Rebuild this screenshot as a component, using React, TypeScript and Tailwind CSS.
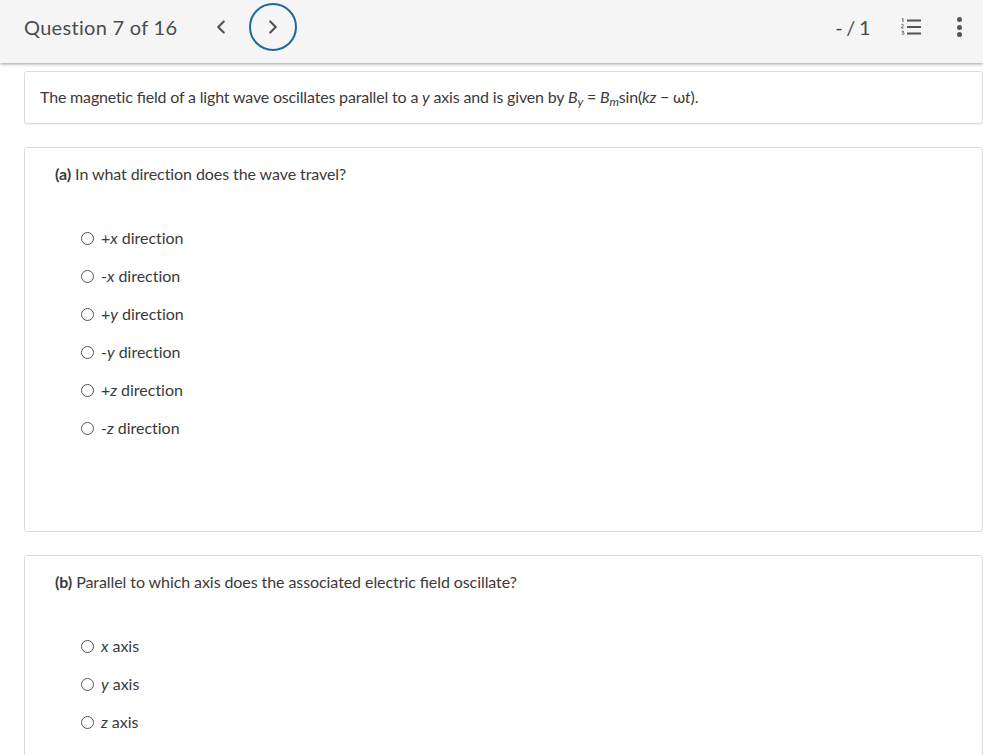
import React from 'react';
import { ChevronLeft, ChevronRight } from 'lucide-react';

const partA = [
  { sign: '+', axis: 'x' },
  { sign: '-', axis: 'x' },
  { sign: '+', axis: 'y' },
  { sign: '-', axis: 'y' },
  { sign: '+', axis: 'z' },
  { sign: '-', axis: 'z' },
];

const partB = ['x', 'y', 'z'];

const Radio: React.FC<{ children: React.ReactNode }> = ({ children }) => (
  <label className="flex items-center h-[38px] text-[16px] tracking-[-0.02px] text-[#3a3a3a]">
    <span className="w-[13px] h-[13px] rounded-full border border-[#555] bg-white flex-shrink-0" />
    <span className="ml-[7px] -mt-[1px]">{children}</span>
  </label>
);

const ListIcon = () => (
  <svg width="20" height="18" viewBox="0 0 20 18" className="text-[#555]">
    <path d="M6 2.500h14M6 9h14M6 15.500h14" stroke="currentColor" strokeWidth="1.800" fill="none" />
    <path d="M1 1l1-.6v3.800M.4 6.900c.5-.7 2-.6 2 .4 0 .8-1.400 1.500-2 2.700h2.200M.5 13.200h2l-1 1.300c1 0 1.500.4 1.500 1 0 .9-1.500 1.200-2.300.6" stroke="currentColor" strokeWidth=".9" fill="none" />
  </svg>
);

export default function App() {
  return (
    <div className="h-screen overflow-hidden bg-white font-['Lato','Open_Sans',sans-serif] text-[#3a3a3a]">
      <header className="h-[63px] bg-[#f5f5f5] shadow-[0_1px_3px_rgba(0,0,0,0.4)] flex items-center pb-[9px] pl-6 pr-[21px] relative">
        <h1 className="text-[20px] -mt-[1px] text-[#494c4e] w-[176px] tracking-[0.3px]">Question 7 of 16</h1>
        <ChevronLeft className="w-[22px] h-[22px] ml-[10px] text-[#555]" strokeWidth={2.4} />
        <button className="ml-[17px] w-[48px] h-[48px] rounded-full border-2 border-[#1c6a9c] flex items-center justify-center">
          <ChevronRight className="w-[22px] h-[22px] text-[#555]" strokeWidth={2.4} />
        </button>
        <span className="ml-auto text-[20px] -mt-[1px] text-[#494c4e] tracking-[-0.7px]">- / 1</span>
        <span className="ml-[31px] flex"><ListIcon /></span>
        <span className="ml-[36px] flex flex-col gap-[2.500px]">
          <i className="w-[5px] h-[5px] rounded-full bg-[#555]" />
          <i className="w-[5px] h-[5px] rounded-full bg-[#555]" />
          <i className="w-[5px] h-[5px] rounded-full bg-[#555]" />
        </span>
      </header>

      <main className="pl-6 pt-2 flex flex-col gap-[23px]">
        <section className="h-[53px] bg-white border border-[#dcdcdc] rounded-[3px] shadow-[0_1px_1px_rgba(0,0,0,0.05)] pl-[15px] flex items-center text-[16px] tracking-[-0.17px]">
          <p className="-mt-[1px]">
            The magnetic ﬁeld of a light wave oscillates parallel to a <i>y</i> axis and is given by{' '}
            <i>B<sub className="text-[12px]">y</sub></i> = <i>B<sub className="text-[12px]">m</sub></i>sin(<i>kz</i> − ω<i>t</i>).
          </p>
        </section>

        <section className="h-[385px] bg-white border border-[#dcdcdc] rounded-[3px] pl-[30px] pt-[14px]">
          <p className="text-[16px] leading-[24px] tracking-[-0.08px]"><b>(a)</b> In what direction does the wave travel?</p>
          <div className="mt-[33px] ml-[26px]">
            {partA.map(o => (
              <Radio key={o.sign + o.axis}>{o.sign}<i>{o.axis}</i> direction</Radio>
            ))}
          </div>
        </section>

        <section className="h-[300px] bg-white border border-[#dcdcdc] rounded-[3px] pl-[30px] pt-[14px]">
          <p className="text-[16px] leading-[24px] tracking-[-0.08px]"><b>(b)</b> Parallel to which axis does the associated electric ﬁeld oscillate?</p>
          <div className="mt-[33px] ml-[26px]">
            {partB.map(a => (
              <Radio key={a}><i>{a}</i> axis</Radio>
            ))}
          </div>
        </section>
      </main>
    </div>
  );
}
